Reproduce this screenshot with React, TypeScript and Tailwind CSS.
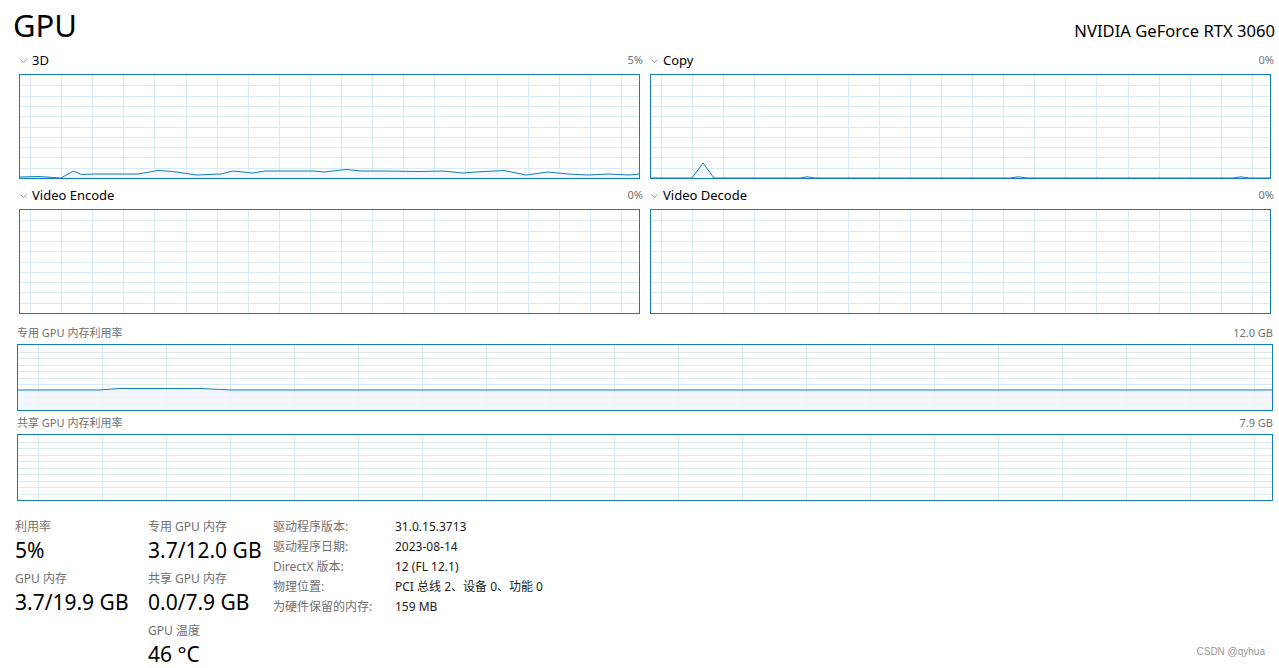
import React from "react";

type Pt = [number, number];

// 3D engine: [x on page, height above baseline]
const load3d: Pt[] = [
  [20, 1], [39, 1.5], [61, 0], [73.5, 7], [81.6, 3.5], [94, 4], [138, 4], [158, 7.5],
  [172.5, 6.5], [197, 3], [221, 4], [233, 7], [253, 5], [265, 7], [314, 7], [324, 6],
  [346, 8.5], [362, 7], [386, 7], [419, 6.5], [443, 7], [463, 5], [475, 6], [504, 7.5],
  [526, 3], [548, 6], [568, 4], [588, 3], [608, 4], [629, 3], [640, 4],
];

const loadCopy: Pt[] = [
  [651, 0], [692, 0], [703, 15], [714, 0], [800, 0], [807, 1.2], [815, 0],
  [1010, 0], [1018, 1.2], [1027, 0], [1233, 0], [1241, 1.2], [1249, 0], [1271, 0],
];

const dedicated: Pt[] = [
  [18, 20], [100, 20], [120, 21.5], [200, 21.5], [232, 20], [1272, 20],
];

function Chevron() {
  return (
    <svg width="9" height="6" viewBox="0 0 9 6" className="shrink-0">
      <polyline points="1.5,1.5 4.5,4.5 7.5,1.5" fill="none" stroke="#999999" strokeWidth="1" />
    </svg>
  );
}

function Chart({
  width,
  height,
  left,
  colW,
  colOff,
  rows,
  points,
}: {
  width: number;
  height: number;
  left: number;
  colW: number;
  colOff: number;
  rows: number;
  points?: Pt[];
}) {
  const vlines: number[] = [];
  for (let x = colOff; x < width; x += colW) vlines.push(Math.round(x));
  const hlines: number[] = [];
  for (let i = 1; i < rows; i++) hlines.push(Math.round((height * i) / rows));

  let line = "";
  let area = "";
  if (points) {
    const pts = points.map(([x, up]) => `${(x - left).toFixed(1)},${(height - up).toFixed(1)}`);
    line = pts.join(" ");
    area = `${(points[0][0] - left).toFixed(1)},${height} ${line} ${(points[points.length - 1][0] - left).toFixed(1)},${height}`;
  }

  return (
    <div className="border border-[#117dbb] bg-white">
      <svg width={width} height={height} className="block">
        {vlines.map((x) => (
          <line key={"v" + x} x1={x + 0.5} y1={0} x2={x + 0.5} y2={height} stroke="#d9eaf4" strokeWidth="1" />
        ))}
        {hlines.map((y) => (
          <line key={"h" + y} x1={0} y1={y + 0.5} x2={width} y2={y + 0.5} stroke="#d9eaf4" strokeWidth="1" />
        ))}
        {points && (
          <>
            <polygon points={area} fill="#f1f6fa" fillOpacity="0.85" />
            <polyline points={line} fill="none" stroke="#117dbb" strokeWidth="1" />
          </>
        )}
      </svg>
    </div>
  );
}

function EngineCell({
  label,
  pct,
  left,
  points,
}: {
  label: string;
  pct: string;
  left: number;
  points?: Pt[];
}) {
  return (
    <div className="flex flex-col">
      <div className="h-[30px] pt-[3px] flex items-center justify-between">
        <div className="flex items-center gap-[4px]">
          <Chevron />
          <span className="text-[13px] text-black">{label}</span>
        </div>
        <span className="text-[11px] text-[#707070] mr-[-3px]">{pct}</span>
      </div>
      <Chart width={619} height={103} left={left} colW={31.1} colOff={10} rows={10} points={points} />
    </div>
  );
}

function Stat({ label, value }: { label: string; value: string }) {
  return (
    <div className="mb-[6px]">
      <div className="h-[18px] leading-[18px] text-[12px] text-[#707070]">{label}</div>
      <div className="h-[28px] leading-[28px] text-[21px] text-black">{value}</div>
    </div>
  );
}

const info: [string, string][] = [
  ["驱动程序版本:", "31.0.15.3713"],
  ["驱动程序日期:", "2023-08-14"],
  ["DirectX 版本:", "12 (FL 12.1)"],
  ["物理位置:", "PCI 总线 2、设备 0、功能 0"],
  ["为硬件保留的内存:", "159 MB"],
];

export default function App() {
  return (
    <div className="relative w-[1279px] h-[668px] overflow-hidden bg-white font-['Segoe_UI','Noto_Sans','Noto_Sans_CJK_SC',sans-serif] text-black">
      <div className="pl-[17px] pr-[6px]">
        {/* Header */}
        <div className="h-[44px] flex items-end justify-between pb-[3px]">
          <span className="ml-[-4px] text-[31px] leading-none">GPU</span>
          <span className="text-[16.6px] leading-none mb-[1px] mr-[-2px]">NVIDIA GeForce RTX 3060</span>
        </div>

        {/* Engine charts */}
        <div className="grid grid-cols-2 gap-x-[10px] px-[2px]">
          <EngineCell label="3D" pct="5%" left={20} points={load3d} />
          <EngineCell label="Copy" pct="0%" left={651} points={loadCopy} />
          <EngineCell label="Video Encode" pct="0%" left={20} />
          <EngineCell label="Video Decode" pct="0%" left={651} />
        </div>

        {/* Memory charts */}
        <div className="h-[30px] flex items-end justify-between pb-[6px] text-[11px] text-[#707070] leading-none">
          <span>专用 GPU 内存利用率</span>
          <span>12.0 GB</span>
        </div>
        <Chart width={1254} height={65} left={18} colW={64} colOff={20} rows={10} points={dedicated} />
        <div className="h-[23px] flex items-end justify-between pb-[6px] text-[11px] text-[#707070] leading-none">
          <span>共享 GPU 内存利用率</span>
          <span>7.9 GB</span>
        </div>
        <Chart width={1254} height={65} left={18} colW={64} colOff={20} rows={10} />

        {/* Stats */}
        <div className="flex pt-[17px]">
          <div className="w-[133px] ml-[-2px]">
            <Stat label="利用率" value="5%" />
            <Stat label="GPU 内存" value="3.7/19.9 GB" />
          </div>
          <div className="w-[125px]">
            <Stat label="专用 GPU 内存" value="3.7/12.0 GB" />
            <Stat label="共享 GPU 内存" value="0.0/7.9 GB" />
            <Stat label="GPU 温度" value="46 °C" />
          </div>
          <div className="mt-[-1px] text-[12px] leading-[20px]">
            {info.map(([k, v]) => (
              <div key={k} className="flex">
                <span className="w-[122px] text-[#707070]">{k}</span>
                <span className="text-[#1a1a1a]">{v}</span>
              </div>
            ))}
          </div>
        </div>
      </div>

      <span className="absolute right-[14px] bottom-[9px] text-[10px] text-[#999999] font-['Liberation_Sans',Arial,sans-serif]">
        CSDN @qyhua
      </span>
    </div>
  );
}
